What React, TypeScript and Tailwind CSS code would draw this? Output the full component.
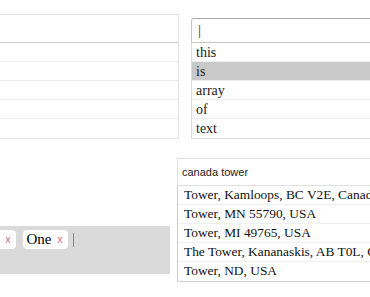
const serif = { fontFamily: '"Liberation Serif", "Times New Roman", serif' };

const words = ["this", "is", "array", "of", "text"];
const places = [
  "Tower, Kamloops, BC V2E, Canada",
  "Tower, MN 55790, USA",
  "Tower, MI 49765, USA",
  "The Tower, Kananaskis, AB T0L, Canada",
  "Tower, ND, USA",
];

function Tag({ label }: { label: string }) {
  return (
    <span className="flex h-[19px] shrink-0 items-center gap-[6px] rounded-sm bg-white pl-[3px] pr-[6px] text-[15px] text-black">
      {label}
      <span className="font-['Liberation_Sans',sans-serif] text-[10px] text-[#d9677a]">x</span>
    </span>
  );
}

export default function App() {
  return (
    <div className="h-[297px] w-[370px] overflow-hidden bg-white" style={serif}>
      <div className="flex items-start">
        {/* left list, cut off on the left */}
        <div className="-ml-px mt-[14px] w-[180px] shrink-0 border border-[#e2e2e2]">
          <div className="h-[28px] border-b border-[#cfcfcf]" />
          {[0, 1, 2, 3, 4].map((i) => (
            <div key={i} className="h-[19px] border-b border-[#ececec] last:border-b-0" />
          ))}
        </div>

        {/* right autocomplete */}
        <div className="-mr-[20px] ml-[12px] mt-[18px] min-w-0 flex-1">
          <div className="flex h-[25px] items-center rounded-t-[3px] border border-[#c6c6c6] border-t-[#a9a9a9] px-[6px] text-[15px] text-[#333]">
            |
          </div>
          <div className="border border-t-0 border-[#dcdcdc]">
            {words.map((w) => (
              <div
                key={w}
                className={`flex h-[19px] items-center border-b border-[#eeeeee] px-[4px] text-[14px] text-[#222] last:border-b-0 ${
                  w === "is" ? "bg-[#c9c9c9]" : "bg-white"
                }`}
              >
                {w}
              </div>
            ))}
          </div>
        </div>
      </div>

      <div className="flex items-start">
        {/* tag input */}
        <div className="mt-[87px] flex h-[48px] w-[170px] shrink-0 items-start gap-[7px] bg-[#dadada] pt-[4px]">
          <div className="-ml-[30px]">
            <Tag label="Two" />
          </div>
          <Tag label="One" />
          <span className="-ml-[2px] mt-[3px] h-[14px] w-px shrink-0 bg-[#888]" />
        </div>

        {/* geocode autocomplete */}
        <div className="-mr-[20px] ml-[7px] mt-[19px] min-w-0 flex-1">
          <div className="flex h-[28px] items-center border border-[#e0e0e0] px-[4px] font-['Liberation_Sans',sans-serif] text-[11px] text-[#222]">
            canada tower
          </div>
          <div className="border border-t-0 border-[#cfcfcf]">
            {places.map((p) => (
              <div
                key={p}
                className="flex h-[19px] items-center overflow-hidden whitespace-nowrap border-b border-[#f0f0f0] pl-[6px] pr-[4px] text-[13.4px] text-[#111] last:border-b-0"
              >
                {p}
              </div>
            ))}
          </div>
        </div>
      </div>
    </div>
  );
}
